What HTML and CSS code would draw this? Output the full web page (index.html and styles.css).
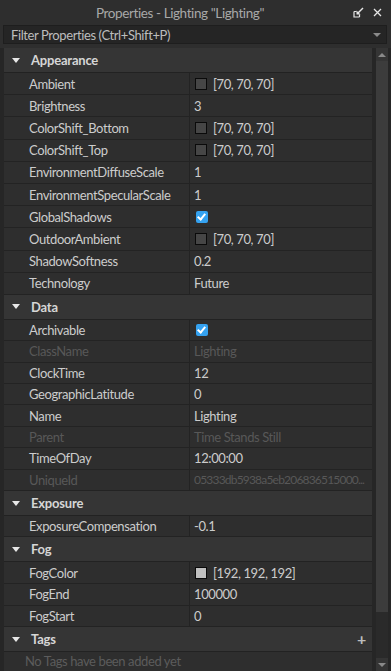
FILE: index.html
```html
<!DOCTYPE html>
<html lang="en">

<head>
  <meta charset="UTF-8" />
  <meta name="viewport" content="width=device-width, initial-scale=1.0" />
  <title>Properties</title>
  <link rel="stylesheet" href="styles.css">
</head>

<body>
  <div class="window">
    <header class="titlebar">
      <span class="title">Properties - Lighting "Lighting"</span>
      <div class="title-icons">
        <svg width="11" height="11" viewBox="0 0 11 11">
          <path d="M1 4.5V10H6.5" fill="none" stroke="#e6e6e6" stroke-width="1.2" />
          <path d="M1 4.5H3.5M6.5 10V7.5" fill="none" stroke="#e6e6e6" stroke-width="1.2" />
          <path d="M10 1L5 6" stroke="#e6e6e6" stroke-width="1.4" />
          <path d="M3.5 3.5V7.5H7.5Z" fill="#e6e6e6" />
        </svg>
        <svg width="9" height="9" viewBox="0 0 9 9">
          <path d="M1 1L8 8M8 1L1 8" stroke="#e6e6e6" stroke-width="1.3" />
        </svg>
      </div>
    </header>

    <div class="filter">
      <span>Filter Properties (Ctrl+Shift+P)</span>
      <span class="tri-small"></span>
    </div>

    <div class="panel">
      <div class="list">
        <div class="section"><span class="arrow"></span>Appearance</div>
        <div class="row"><span class="name">Ambient</span><span class="value"><i class="swatch"></i>[70, 70, 70]</span></div>
        <div class="row"><span class="name">Brightness</span><span class="value">3</span></div>
        <div class="row"><span class="name">ColorShift_Bottom</span><span class="value"><i class="swatch"></i>[70, 70, 70]</span></div>
        <div class="row"><span class="name">ColorShift_Top</span><span class="value"><i class="swatch"></i>[70, 70, 70]</span></div>
        <div class="row"><span class="name">EnvironmentDiffuseScale</span><span class="value">1</span></div>
        <div class="row"><span class="name">EnvironmentSpecularScale</span><span class="value">1</span></div>
        <div class="row"><span class="name">GlobalShadows</span><span class="value"><i class="check"></i></span></div>
        <div class="row"><span class="name">OutdoorAmbient</span><span class="value"><i class="swatch"></i>[70, 70, 70]</span></div>
        <div class="row"><span class="name">ShadowSoftness</span><span class="value">0.2</span></div>
        <div class="row"><span class="name">Technology</span><span class="value">Future</span></div>

        <div class="section"><span class="arrow"></span>Data</div>
        <div class="row short"><span class="name">Archivable</span><span class="value"><i class="check"></i></span></div>
        <div class="row short off"><span class="name">ClassName</span><span class="value">Lighting</span></div>
        <div class="row short"><span class="name">ClockTime</span><span class="value">12</span></div>
        <div class="row short"><span class="name">GeographicLatitude</span><span class="value">0</span></div>
        <div class="row short"><span class="name">Name</span><span class="value">Lighting</span></div>
        <div class="row short off"><span class="name">Parent</span><span class="value">Time Stands Still</span></div>
        <div class="row short"><span class="name">TimeOfDay</span><span class="value">12:00:00</span></div>
        <div class="row short off"><span class="name">UniqueId</span><span class="value uid">05333db5938a5eb206836515000...</span></div>

        <div class="section"><span class="arrow"></span>Exposure</div>
        <div class="row short"><span class="name">ExposureCompensation</span><span class="value">-0.1</span></div>

        <div class="section"><span class="arrow"></span>Fog</div>
        <div class="row mid"><span class="name">FogColor</span><span class="value"><i class="swatch light"></i>[192, 192, 192]</span></div>
        <div class="row mid"><span class="name">FogEnd</span><span class="value">100000</span></div>
        <div class="row mid"><span class="name">FogStart</span><span class="value">0</span></div>

        <div class="section"><span class="arrow"></span>Tags<span class="plus">+</span></div>
        <div class="empty">No Tags have been added yet</div>
      </div>

      <div class="scrollbar">
        <div class="sb-btn"><span class="tri-up"></span></div>
        <div class="sb-track">
          <div class="sb-thumb"></div>
        </div>
        <div class="sb-btn"><span class="tri-small"></span></div>
      </div>
    </div>
  </div>
</body>

</html>
```

FILE: styles.css
```css
* {
  margin: 0;
  padding: 0;
  box-sizing: border-box;
}

html,
body {
  width: 391px;
  height: 671px;
  overflow: hidden;
  background: #2e2e2e;
  font-family: Lato, 'Noto Sans', sans-serif;
  font-size: 13px;
  letter-spacing: -0.4px;
  color: #cccccc;
}

.window {
  display: flex;
  flex-direction: column;
  height: 671px;
  background: #2e2e2e;
}

.titlebar {
  height: 25px;
  display: flex;
  align-items: center;
  justify-content: center;
  position: relative;
  background: #2e2e2e;
}

.title {
  color: #a8a8a8;
  font-size: 13.5px;
  margin-left: -31px;
}

.title-icons {
  position: absolute;
  right: 9px;
  top: 7px;
  display: flex;
  gap: 9px;
  align-items: center;
}

.filter {
  height: 19px;
  margin: 0 4px 0 3px;
  background: #252525;
  border: 1px solid #1e1e1e;
  display: flex;
  align-items: center;
  justify-content: space-between;
  padding: 0 5px 0 7px;
  color: #bdbdbd;
}

.tri-small {
  width: 0;
  height: 0;
  border-left: 4px solid transparent;
  border-right: 4px solid transparent;
  border-top: 4px solid #8a8a8a;
}

.tri-up {
  width: 0;
  height: 0;
  border-left: 4px solid transparent;
  border-right: 4px solid transparent;
  border-bottom: 4px solid #8a8a8a;
}

.panel {
  flex: 1;
  display: flex;
  margin-top: 4px;
  padding-left: 4px;
  overflow: hidden;
  background: #262626;
}

.list {
  width: 368px;
  overflow: hidden;
  background: #2e2e2e;
}

.section {
  height: 25px;
  display: flex;
  align-items: center;
  background: #353535;
  border-bottom: 1px solid #222222;
  font-weight: bold;
  color: #d6d6d6;
  letter-spacing: -0.2px;
  position: relative;
}

.arrow {
  width: 0;
  height: 0;
  margin: 0 11px 0 8px;
  border-left: 4px solid transparent;
  border-right: 4px solid transparent;
  border-top: 5px solid #e8e8e8;
}

.plus {
  position: absolute;
  right: 6px;
  top: 2px;
  font-weight: bold;
  font-size: 16px;
  color: #bdbdbd;
}

.row {
  height: 22.2px;
  display: grid;
  grid-template-columns: 186px 1fr;
  border-bottom: 1px solid #232323;
}

.row.short {
  height: 21.4px;
}

.row.mid {
  height: 21.6px;
}

.name {
  padding-left: 25px;
  border-right: 1px solid #232323;
  display: flex;
  align-items: center;
  white-space: nowrap;
  overflow: hidden;
}

.value {
  padding-left: 4px;
  display: flex;
  align-items: center;
  white-space: nowrap;
  overflow: hidden;
}

.value.uid {
  font-size: 12px;
  letter-spacing: -0.8px;
}

.off .name,
.off .value {
  color: #585858;
}

.swatch {
  width: 12px;
  height: 12px;
  margin: 0 6px 0 1px;
  background: #464646;
  border: 1px solid #0a0a0a;
}

.swatch.light {
  background: #c0c0c0;
}

.check {
  width: 12px;
  height: 12px;
  margin-left: 2px;
  border-radius: 2px;
  background: #35a2f0;
  position: relative;
}

.check::after {
  content: "";
  position: absolute;
  left: 3px;
  top: 1px;
  width: 3px;
  height: 6px;
  border-right: 2px solid #ffffff;
  border-bottom: 2px solid #ffffff;
  transform: rotate(40deg);
}

.empty {
  height: 20px;
  padding-left: 21px;
  line-height: 18px;
  color: #5c5c5c;
}

.scrollbar {
  width: 12px;
  margin-left: 4px;
  display: flex;
  flex-direction: column;
  background: #2a2a2a;
}

.sb-btn {
  height: 13px;
  display: flex;
  align-items: center;
  justify-content: center;
  background: #353535;
}

.sb-track {
  flex: 1;
  background: #2a2a2a;
}

.sb-thumb {
  height: 551px;
  background: #3c3c3c;
}
```
